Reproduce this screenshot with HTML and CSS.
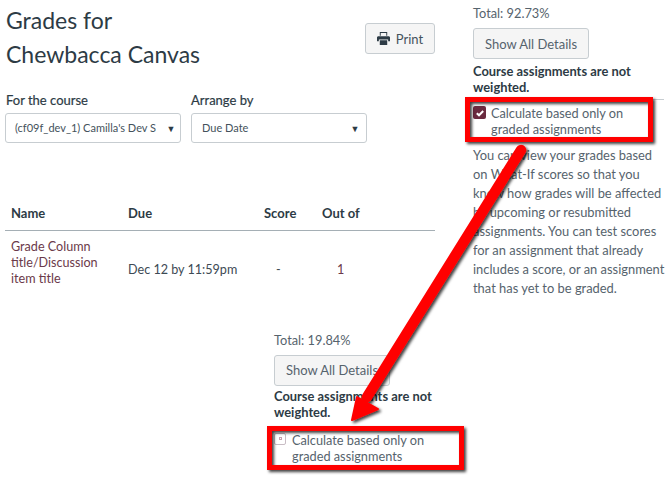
FILE: index.html
```html
<!DOCTYPE html>
<html lang="en">
<head>
<meta charset="utf-8">
<title>Grades for Chewbacca Canvas</title>
<link rel="stylesheet" href="styles.css">
</head>
<body>
<div class="page">
  <main class="main">
    <header class="head">
      <h1 class="title">Grades for<br>Chewbacca Canvas</h1>
      <button class="btn btn-print" type="button">
        <svg class="print-icon" viewBox="0 0 14 14" width="13" height="13"><path fill="#2d3b45" d="M3 0h8v4H10V1H4v3H3zM1.500 4.500h11c.8 0 1.500.7 1.500 1.500V10h-2V8H2v2H0V6c0-.8.7-1.500 1.500-1.500zM3 9h8v5H3z"/></svg>
        Print
      </button>
    </header>
    <div class="filters">
      <div class="field field-course">
        <label class="field-label">For the course</label>
        <div class="select select-course"><span class="select-text">(cf09f_dev_1) Camilla's Dev Sandbox</span><span class="caret">▼</span></div>
      </div>
      <div class="field field-arrange">
        <label class="field-label">Arrange by</label>
        <div class="select select-arrange"><span class="select-text">Due Date</span><span class="caret">▼</span></div>
      </div>
    </div>
    <table class="grades">
      <thead>
        <tr><th class="c-name">Name</th><th class="c-due">Due</th><th class="c-score">Score</th><th class="c-out">Out of</th></tr>
      </thead>
      <tbody>
        <tr>
          <td class="c-name link">Grade Column title/Discussion item title</td>
          <td class="c-due">Dec 12 by 11:59pm</td>
          <td class="c-score center">-</td>
          <td class="c-out center link">1</td>
        </tr>
      </tbody>
    </table>
    <section class="side side-bottom">
      <div class="total">Total: 19.84%</div>
      <button class="btn btn-details" type="button">Show All Details</button>
      <p class="note">Course assignments are not weighted.</p>
      <div class="check-row">
        <span class="box box-off"><span class="box-dot"></span></span>
        <span class="check-label">Calculate based only on graded assignments</span>
      </div>
    </section>
  </main>
  <aside class="side side-top">
    <div class="total">Total: 92.73%</div>
    <button class="btn btn-details" type="button">Show All Details</button>
    <p class="note">Course assignments are not weighted.</p>
    <div class="rule"></div>
    <div class="check-row">
      <span class="box box-on"><svg viewBox="0 0 12 12" width="12" height="12"><path d="M2.800 6.200 5 8.300 9.200 4" fill="none" stroke="#fff" stroke-width="2"/></svg></span>
      <span class="check-label">Calculate based only on graded assignments</span>
    </div>
    <p class="help">You can view your grades based on What-If scores so that you know how grades will be affected by upcoming or resubmitted assignments. You can test scores for an assignment that already includes a score, or an assignment that has yet to be graded.</p>
  </aside>
</div>
<svg class="marks" viewBox="0 0 672 477" width="672" height="477">
  <defs>
    <filter id="shadow" x="-10%" y="-10%" width="120%" height="120%">
      <feDropShadow dx="2" dy="2" stdDeviation="1.500" flood-color="#000" flood-opacity=".75"/>
    </filter>
  </defs>
  <g filter="url(#shadow)">
    <rect x="467.500" y="99.500" width="183" height="40" fill="none" stroke="#f00" stroke-width="5"/>
    <rect x="269.500" y="428.500" width="192" height="39" fill="none" stroke="#f00" stroke-width="5"/>
    <path d="M521 150 367 397" stroke="#f00" stroke-width="10.500" stroke-linecap="round" fill="none"/>
    <path d="M352 420 357 397 378 409z" fill="#f00" stroke="#f00" stroke-width="2" stroke-linejoin="round"/>
  </g>
</svg>
</body>
</html>
```
FILE: styles.css
```css
* { box-sizing: border-box; }
html, body { margin: 0; padding: 0; }
body {
  width: 672px;
  height: 477px;
  overflow: hidden;
  background: #fff;
  color: #2d3b45;
  font-family: Lato, "Liberation Sans", sans-serif;
  font-size: 13px;
  position: relative;
}
.page { display: flex; align-items: flex-start; }
.main { width: 430px; margin-left: 5px; margin-right: 38px; flex: none; }
.head { display: flex; justify-content: space-between; align-items: flex-start; height: 77px; }
.title { margin: 3px 0 0 1px; font-size: 23px; font-weight: 400; line-height: 34px; }
.btn {
  font-family: inherit;
  font-size: 13px;
  color: #2d3b45;
  background: #f5f5f5;
  border: 1px solid #c7cdd1;
  border-radius: 3px;
  height: 31px;
  padding: 0;
}
.btn-print {
  width: 70px;
  margin-top: 23px;
  display: flex;
  align-items: center;
  justify-content: center;
  gap: 6px;
  color: #44525c;
}
.filters { display: flex; gap: 10px; margin-top: 14px; }
.field { width: 176px; }
.field-label { display: block; font-size: 13px; line-height: 18px; font-weight: 400; -webkit-text-stroke: .2px #2d3b45; }
.field-course .field-label { margin-left: 1px; }
.select {
  margin-top: 4px;
  height: 30px;
  border: 1px solid #c7cdd1;
  border-radius: 3px;
  display: flex;
  align-items: center;
  font-size: 11px;
  color: #44525c;
  background: #fff;
  padding-right: 5px;
}
.select-course { padding-left: 9px; padding-right: 3px; }
.select-arrange { padding-left: 10px; }
.select-text { flex: 1; white-space: nowrap; overflow: hidden; min-width: 0; padding-bottom: 2px; }
.select-course .select-text { margin-right: 9px; }
.caret { font-size: 9px; color: #2d3b45; width: 12px; text-align: center; }
.grades { margin-top: 51px; width: 430px; border-collapse: collapse; table-layout: fixed; font-size: 13px; }
.grades th { font-weight: 700; text-align: left; height: 36px; padding: 2px 0 0; border-bottom: 1px solid #a5afb5; }
.grades td { padding: 8px 0 12px; line-height: 16px; color: #3d4a54; font-size: 12.600px; }
.grades th.c-name { padding-left: 6px; }
.grades th.c-name, .grades td.c-name { width: 123px; }
.grades td.c-name { padding-left: 6px; padding-right: 20px; }
.grades td.c-due, .grades td.c-score, .grades td.c-out { padding-top: 23px; }
.grades .c-due { width: 136px; }
.grades .c-score { width: 58px; }
.grades .c-out { width: 113px; }
.grades td.center { padding-left: 12px; }
.grades td.c-out.center { padding-left: 15px; }
.grades td.link { color: #6b3a4a; }
.side { font-size: 13px; line-height: 16px; }
.side-top { width: 194px; flex: none; }
.side-bottom { width: 194px; margin: 28px 0 0 269px; }
.total { color: #56636d; font-size: 12.800px; line-height: 18px; padding-top: 4px; }
.btn-details { display: block; width: 116px; margin-top: 6px; color: #56636d; }
.note { margin: 4px 0 0; font-weight: 700; color: #2d3b45; font-size: 12.900px; line-height: 16px; }
.side-bottom .note { margin-top: 2px; }
.rule { height: 1px; background: #c7cdd1; margin-top: 4px; width: 191px; }
.check-row { display: flex; gap: 6px; margin-top: 5px; align-items: flex-start; }
.side-bottom .check-row { margin-top: 12px; }
.check-label { color: #56636d; font-size: 12.750px; line-height: 16px; width: 170px; }
.box { width: 13px; height: 13px; border-radius: 2px; flex: none; margin-top: 1px; display: flex; align-items: center; justify-content: center; }
.box-on { background: #6b2a3f; margin-right: -1px; }
.box-off { width: 12px; height: 12px; border: 1px solid #c8bcc4; background: #fff; }
.box-dot { width: 3px; height: 3px; border: 1px solid #c79fae; }
.help { margin: 9px 0 0; color: #56636d; font-size: 12.900px; line-height: 19px; }
.marks { position: absolute; left: 0; top: 0; pointer-events: none; }
```
